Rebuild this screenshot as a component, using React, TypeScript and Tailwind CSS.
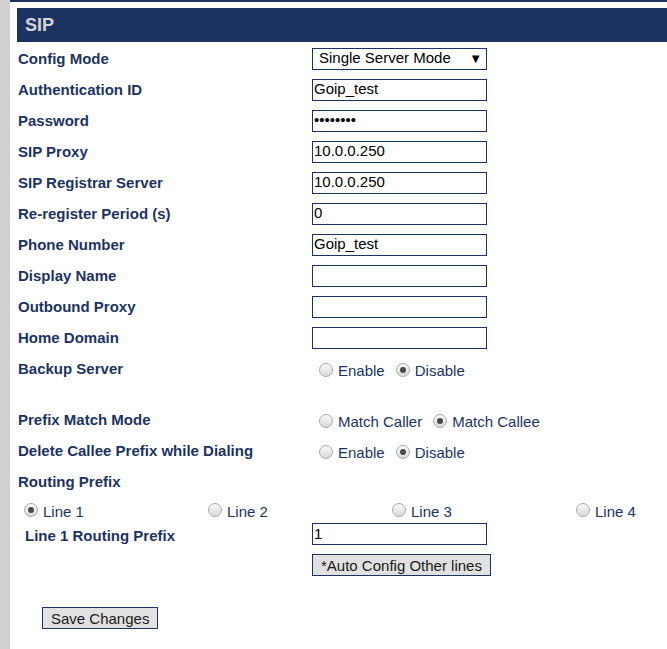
import type { ReactNode } from "react";

const navy = "text-[#1c3362]";

type RadioOpt = { label: string; checked?: boolean };

const textFields: Array<{ label: string; value: string; type?: string }> = [
  { label: "Authentication ID", value: "Goip_test" },
  { label: "Password", value: "goiptest", type: "password" },
  { label: "SIP Proxy", value: "10.0.0.250" },
  { label: "SIP Registrar Server", value: "10.0.0.250" },
  { label: "Re-register Period (s)", value: "0" },
  { label: "Phone Number", value: "Goip_test" },
  { label: "Display Name", value: "" },
  { label: "Outbound Proxy", value: "" },
  { label: "Home Domain", value: "" },
];

function Radio({ checked }: { checked?: boolean }) {
  return (
    <span className="mb-[4px] flex h-[14px] w-[14px] shrink-0 items-center justify-center rounded-full border border-[#a9a9a9] bg-gradient-to-b from-[#fafafa] to-[#d9d9d9]">
      {checked ? <span className="h-[6px] w-[6px] rounded-full bg-[#4a4a4a]" /> : null}
    </span>
  );
}

function RadioGroup({ options }: { options: RadioOpt[] }) {
  return (
    <div className="flex items-center gap-[11px] pl-[7px] pt-[6px]">
      {options.map((opt) => (
        <label key={opt.label} className={`flex items-center gap-[5px] text-[15px] ${navy}`}>
          <Radio checked={opt.checked} />
          {opt.label}
        </label>
      ))}
    </div>
  );
}

function Row({ label, children, indent }: { label: string; children?: ReactNode; indent?: boolean }) {
  return (
    <div className="flex h-[31px] items-center">
      <div className={`w-[295px] shrink-0 pt-[2px] text-[15px] font-bold ${navy} ${indent ? "pl-[8px]" : "pl-[1px]"}`}>
        {label}
      </div>
      {children}
    </div>
  );
}

function Field({ value, type = "text" }: { value: string; type?: string }) {
  return (
    <input
      type={type}
      readOnly
      value={value}
      className="h-[22px] w-[175px] border border-[#1c3362] bg-white px-[1px] text-[15px] text-black outline-none"
    />
  );
}

export default function App() {
  return (
    <div className="flex min-h-[649px] bg-white" style={{ fontFamily: '"Liberation Sans", Arial, sans-serif' }}>
      <div className="w-[10px] shrink-0 bg-[#d0d0d0]" />
      <div className="flex-1">
        <div className="h-[2px] bg-[#1c3362]" />
        <div className="ml-[7px] mt-[6px]">
          <div className="mb-[1px] flex h-[34px] items-center bg-[#1c3362] pl-[8px] text-[18px] font-bold text-[#d4d4d4]">
            SIP
          </div>

          <Row label="Config Mode">
            <div className="flex h-[22px] w-[175px] items-center justify-between border border-[#1c3362] pl-[6px] pr-[4px] text-[15px] text-black">
              <span>Single Server Mode</span>
              <span className="text-[13px]">▼</span>
            </div>
          </Row>

          {textFields.map((f) => (
            <Row key={f.label} label={f.label}>
              <Field value={f.value} type={f.type} />
            </Row>
          ))}

          <Row label="Backup Server">
            <RadioGroup options={[{ label: "Enable" }, { label: "Disable", checked: true }]} />
          </Row>

          <div className="h-[20px]" />

          <Row label="Prefix Match Mode">
            <RadioGroup options={[{ label: "Match Caller" }, { label: "Match Callee", checked: true }]} />
          </Row>
          <Row label="Delete Callee Prefix while Dialing">
            <RadioGroup options={[{ label: "Enable" }, { label: "Disable", checked: true }]} />
          </Row>
          <Row label="Routing Prefix" />

          <div className="grid h-[26px] grid-cols-[184px_184px_184px_1fr] items-center">
            {["Line 1", "Line 2", "Line 3", "Line 4"].map((line, i) => (
              <label key={line} className={`flex items-center gap-[5px] pl-[7px] pt-[4px] text-[15px] ${navy}`}>
                <Radio checked={i === 0} />
                {line}
              </label>
            ))}
          </div>

          <div className="flex h-[22px] items-center">
            <div className={`w-[295px] shrink-0 pl-[8px] pt-[4px] text-[15px] font-bold ${navy}`}>Line 1 Routing Prefix</div>
            <Field value="1" />
          </div>

          <div className="mt-[9px] pl-[295px]">
            <button
              type="button"
              className="h-[22px] border border-[#1c3362] bg-[#e1e1e1] px-[8px] text-[15px] text-[#1a1a1a]"
            >
              *Auto Config Other lines
            </button>
          </div>

          <div className="mt-[29px] pl-[25px]">
            <button
              type="button"
              className="h-[22px] border border-[#1c3362] bg-[#e1e1e1] px-[8px] text-[15px] text-[#1a1a1a]"
            >
              Save Changes
            </button>
          </div>
        </div>
      </div>
    </div>
  );
}
